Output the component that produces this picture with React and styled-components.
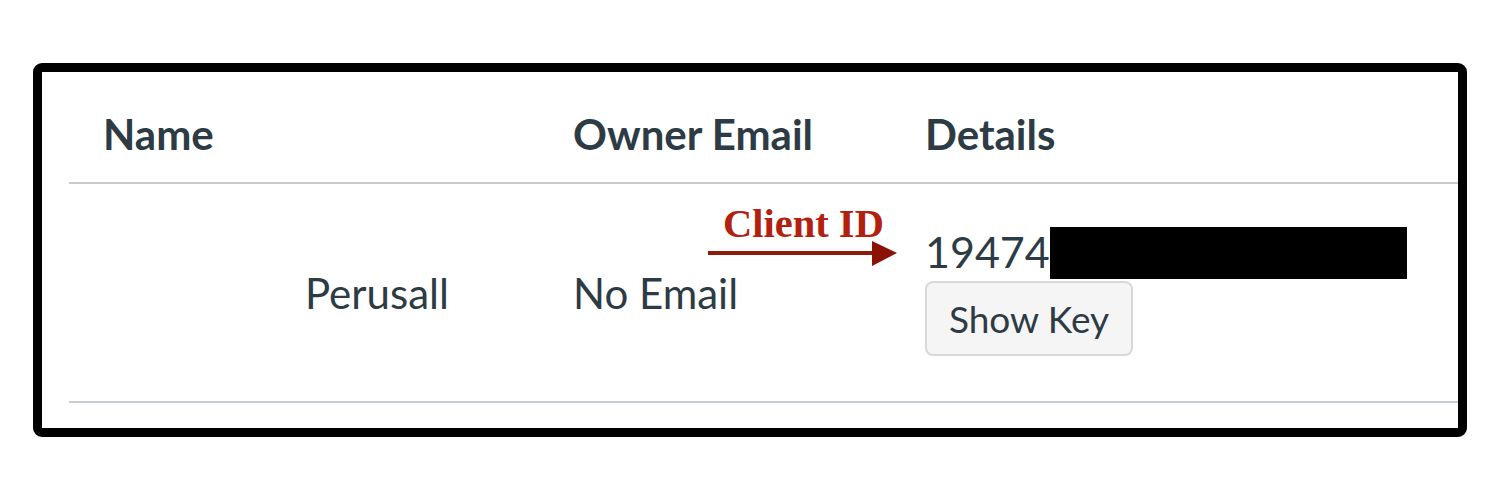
import React from 'react'
import styled, { createGlobalStyle } from 'styled-components'

const GlobalStyle = createGlobalStyle`
  html, body {
    margin: 0;
    padding: 0;
    background: #ffffff;
  }
  body {
    font-family: Lato, "Noto Sans", sans-serif;
    color: #2d3b45;
  }
`

const Page = styled.div`
  width: 1500px;
  height: 500px;
  padding: 63px 33px;
  box-sizing: border-box;
`

const Frame = styled.div`
  height: 374px;
  box-sizing: border-box;
  border: 9px solid #000;
  border-radius: 9px;
  padding-left: 27px;
  overflow: hidden;
`

const Table = styled.div`
  display: grid;
  grid-template-columns: 202px 268px 352px 1fr;
`

const HeadRow = styled.div`
  display: contents;
`

const HeadCell = styled.div`
  grid-column: ${p => p.span || 'auto'};
  padding: 37px 34px 23px;
  font-size: 42px;
  font-weight: 700;
  line-height: 1.2;
  border-bottom: 2px solid #c7cdd1;
  white-space: nowrap;
`

const Row = styled.div`
  grid-column: 1 / -1;
  display: grid;
  grid-template-columns: subgrid;
  align-items: center;
  height: 217px;
  border-bottom: 2px solid #c7cdd1;
  position: relative;
`

const Cell = styled.div`
  padding: 0 34px;
  font-size: 42px;
  line-height: 1.2;
  white-space: nowrap;
`

const Details = styled(Cell)`
  display: flex;
  flex-direction: column;
  align-items: flex-start;
  padding-bottom: 4px;
`

const IdLine = styled.div`
  position: relative;
  font-size: 43px;
`

const Redaction = styled.span`
  position: absolute;
  left: 125px;
  top: 1px;
  width: 357px;
  height: 52px;
  background: #000;
`

const Button = styled.button`
  margin-top: 3px;
  width: 208px;
  height: 75px;
  box-sizing: border-box;
  background: #f5f5f5;
  border: 2px solid #d7dadd;
  border-radius: 8px;
  font-family: Lato, "Noto Sans", sans-serif;
  font-size: 37px;
  color: #2d3b45;
  padding: 0;
`

const Annotation = styled.div`
  position: absolute;
  left: 637px;
  top: 20px;
  display: flex;
  flex-direction: column;
  align-items: flex-start;
`

const Label = styled.div`
  margin-left: 17px;
  font-family: "Liberation Serif", "Times New Roman", serif;
  font-weight: 700;
  font-size: 40.5px;
  line-height: 1;
  color: #b3200e;
`

const Arrow = () => (
  <svg width="194" height="30" viewBox="0 0 194 30" style={{ marginTop: '-6px' }}>
    <line x1="2" y1="14" x2="170" y2="14" stroke="#8e1a0c" strokeWidth="4" />
    <polygon points="166,2 191,14 166,27" fill="#8b1204" />
  </svg>
)

export default function App() {
  return (
    <>
      <GlobalStyle />
      <Page>
        <Frame>
          <Table>
            <HeadRow>
              <HeadCell span="1 / 3">Name</HeadCell>
              <HeadCell>Owner Email</HeadCell>
              <HeadCell>Details</HeadCell>
            </HeadRow>
            <Row>
              <Cell />
              <Cell>Perusall</Cell>
              <Cell>No Email</Cell>
              <Details>
                <IdLine>
                  194740
                  <Redaction />
                </IdLine>
                <Button>Show Key</Button>
              </Details>
              <Annotation>
                <Label>Client ID</Label>
                <Arrow />
              </Annotation>
            </Row>
          </Table>
        </Frame>
      </Page>
    </>
  )
}
